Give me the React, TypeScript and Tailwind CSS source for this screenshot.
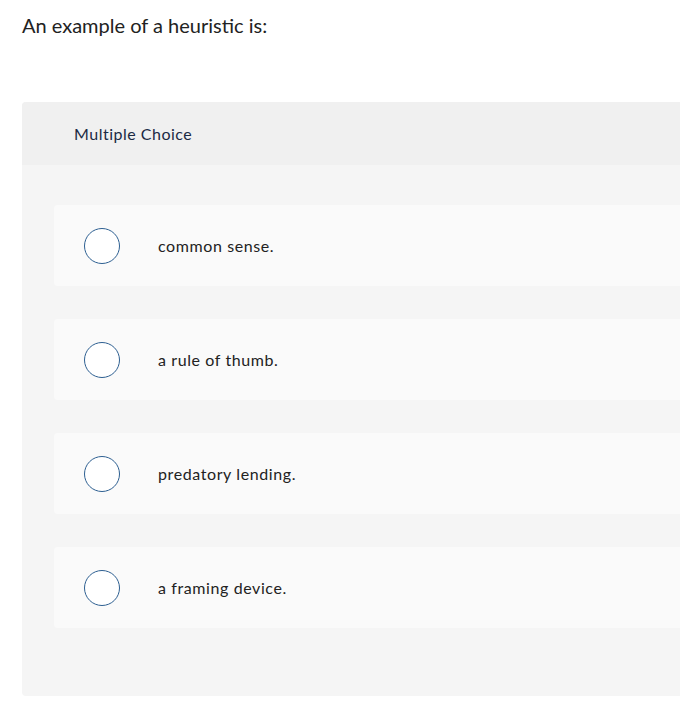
const options = ["common sense.", "a rule of thumb.", "predatory lending.", "a framing device."];

export default function App() {
  return (
    <div className="w-[680px] h-[711px] overflow-hidden bg-white font-['Lato',sans-serif]">
      <div className="pl-[22px] pt-[12px]">
        <p className="text-[20px] leading-[26px] text-[#222]">An example of a heuristic is:</p>
      </div>
      <div className="ml-[22px] mt-[64px] w-[720px] rounded-[4px] overflow-hidden bg-[#f5f5f5]">
        <div className="h-[63px] bg-[#f0f0f0] flex items-center pl-[52px]">
          <span className="text-[16px] tracking-[0.5px] text-[#1b2a44]">Multiple Choice</span>
        </div>
        <div className="pt-[40px] pb-[68px] pl-[32px] flex flex-col gap-[33px]">
          {options.map((o) => (
            <div key={o} className="h-[81px] bg-[#fafafa] rounded-[4px] flex items-center">
              <span className="ml-[30px] w-[36px] h-[36px] rounded-full border-[1.5px] border-[#2d5f91] bg-white shrink-0" />
              <span className="ml-[38px] text-[16px] tracking-[0.6px] text-[#222]">{o}</span>
            </div>
          ))}
        </div>
      </div>
    </div>
  );
}
